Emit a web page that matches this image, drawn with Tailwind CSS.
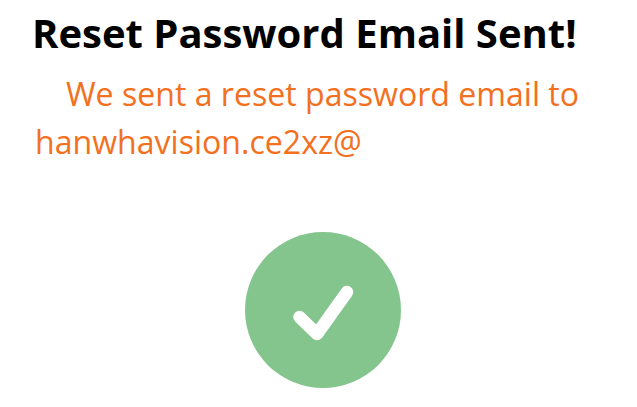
<!DOCTYPE html>
<html><head><meta charset="utf-8"><script src="https://cdn.jsdelivr.net/npm/@tailwindcss/browser@4"></script></head>
<body class="bg-white overflow-hidden">
<div class="w-[637px] h-[407px] overflow-hidden font-['Open_Sans',sans-serif] pl-[32px] pr-[50px]">
<h1 class="text-[40px] font-bold leading-[49px] text-black mt-[8px] whitespace-nowrap">Reset Password Email Sent!</h1>
<p class="text-[32.1px] leading-[48px] text-[#f37021] mt-[13px] indent-[31px] w-[554px] pl-[3px]">We sent a reset password email to hanwhavision.ce2xz@</p>
<div class="flex justify-center mt-[66px] w-[582px]">
<div class="w-[156px] h-[156px] rounded-full bg-[#84c58d] flex items-center justify-center">
<svg width="156" height="156" viewBox="0 0 156 156" fill="none"><path d="M54.500 85 L72 102 L102 60" stroke="#fff" stroke-width="12.500" stroke-linecap="round" stroke-linejoin="round"/></svg>
</div></div>
</div>
</body></html>
